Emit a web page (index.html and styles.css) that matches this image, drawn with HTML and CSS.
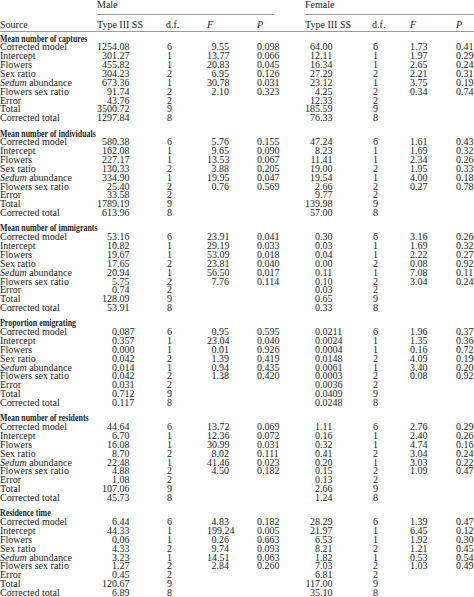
FILE: index.html
```html
<!DOCTYPE html>
<html lang="en">
<head>
<meta charset="utf-8">
<title>ANOVA table</title>
<link rel="stylesheet" href="styles.css">
</head>
<body>
<table class="anova">
  <colgroup>
    <col class="w-src"><col class="w-ssm"><col class="w-dfm"><col class="w-fm"><col class="w-pm">
    <col class="w-ssf"><col class="w-dff"><col class="w-ff"><col class="w-pf">
  </colgroup>
  <thead>
    <tr class="grp">
      <th></th>
      <th colspan="4"><div class="grp-label male">Male</div></th>
      <th colspan="4"><div class="grp-label">Female</div></th>
    </tr>
    <tr class="cols">
      <th>Source</th><th>Type III SS</th><th class="df">d.f.</th><th><i>F</i></th><th><i>P</i></th>
      <th>Type III SS</th><th class="df">d.f.</th><th><i>F</i></th><th><i>P</i></th>
    </tr>
  </thead>

  <tbody class="sec first">
    <tr class="sec-head"><td colspan="9"><span class="sh">Mean number of captures</span></td></tr>
    <tr><td>Corrected model</td><td class="ssm"><span class="i">1254</span>.08</td><td class="df">6</td><td class="fm">9.55</td><td>0.098</td><td class="ssf"><span class="i">64</span>.00</td><td class="df">6</td><td class="ff">1.73</td><td>0.411</td></tr>
    <tr><td>Intercept</td><td class="ssm"><span class="i">301</span>.27</td><td class="df">1</td><td class="fm">13.77</td><td>0.066</td><td class="ssf"><span class="i">12</span>.11</td><td class="df">1</td><td class="ff">1.97</td><td>0.296</td></tr>
    <tr><td>Flowers</td><td class="ssm"><span class="i">455</span>.82</td><td class="df">1</td><td class="fm">20.83</td><td>0.045</td><td class="ssf"><span class="i">16</span>.34</td><td class="df">1</td><td class="ff">2.65</td><td>0.245</td></tr>
    <tr><td>Sex ratio</td><td class="ssm"><span class="i">304</span>.23</td><td class="df">2</td><td class="fm">6.95</td><td>0.126</td><td class="ssf"><span class="i">27</span>.29</td><td class="df">2</td><td class="ff">2.21</td><td>0.311</td></tr>
    <tr><td><i>Sedum</i> abundance</td><td class="ssm"><span class="i">673</span>.36</td><td class="df">1</td><td class="fm">30.78</td><td>0.031</td><td class="ssf"><span class="i">23</span>.12</td><td class="df">1</td><td class="ff">3.75</td><td>0.192</td></tr>
    <tr><td>Flowers sex ratio</td><td class="ssm"><span class="i">91</span>.74</td><td class="df">2</td><td class="fm">2.10</td><td>0.323</td><td class="ssf"><span class="i">4</span>.25</td><td class="df">2</td><td class="ff">0.34</td><td>0.744</td></tr>
    <tr><td>Error</td><td class="ssm"><span class="i">43</span>.76</td><td class="df">2</td><td></td><td></td><td class="ssf"><span class="i">12</span>.33</td><td class="df">2</td><td></td><td></td></tr>
    <tr><td>Total</td><td class="ssm"><span class="i">3500</span>.72</td><td class="df">9</td><td></td><td></td><td class="ssf"><span class="i">185</span>.59</td><td class="df">9</td><td></td><td></td></tr>
    <tr><td>Corrected total</td><td class="ssm"><span class="i">1297</span>.84</td><td class="df">8</td><td></td><td></td><td class="ssf"><span class="i">76</span>.33</td><td class="df">8</td><td></td><td></td></tr>
  </tbody>

  <tbody class="sec">
    <tr class="sec-head"><td colspan="9"><span class="sh">Mean number of individuals</span></td></tr>
    <tr><td>Corrected model</td><td class="ssm"><span class="i">580</span>.38</td><td class="df">6</td><td class="fm">5.76</td><td>0.155</td><td class="ssf"><span class="i">47</span>.24</td><td class="df">6</td><td class="ff">1.61</td><td>0.431</td></tr>
    <tr><td>Intercept</td><td class="ssm"><span class="i">162</span>.08</td><td class="df">1</td><td class="fm">9.65</td><td>0.090</td><td class="ssf"><span class="i">8</span>.23</td><td class="df">1</td><td class="ff">1.69</td><td>0.324</td></tr>
    <tr><td>Flowers</td><td class="ssm"><span class="i">227</span>.17</td><td class="df">1</td><td class="fm">13.53</td><td>0.067</td><td class="ssf"><span class="i">11</span>.41</td><td class="df">1</td><td class="ff">2.34</td><td>0.266</td></tr>
    <tr><td>Sex ratio</td><td class="ssm"><span class="i">130</span>.33</td><td class="df">2</td><td class="fm">3.88</td><td>0.205</td><td class="ssf"><span class="i">19</span>.00</td><td class="df">2</td><td class="ff">1.95</td><td>0.339</td></tr>
    <tr><td><i>Sedum</i> abundance</td><td class="ssm"><span class="i">334</span>.90</td><td class="df">1</td><td class="fm">19.95</td><td>0.047</td><td class="ssf"><span class="i">19</span>.54</td><td class="df">1</td><td class="ff">4.00</td><td>0.183</td></tr>
    <tr><td>Flowers sex ratio</td><td class="ssm"><span class="i">25</span>.40</td><td class="df">2</td><td class="fm">0.76</td><td>0.569</td><td class="ssf"><span class="i">2</span>.66</td><td class="df">2</td><td class="ff">0.27</td><td>0.786</td></tr>
    <tr><td>Error</td><td class="ssm"><span class="i">33</span>.58</td><td class="df">2</td><td></td><td></td><td class="ssf"><span class="i">9</span>.77</td><td class="df">2</td><td></td><td></td></tr>
    <tr><td>Total</td><td class="ssm"><span class="i">1789</span>.19</td><td class="df">9</td><td></td><td></td><td class="ssf"><span class="i">139</span>.98</td><td class="df">9</td><td></td><td></td></tr>
    <tr><td>Corrected total</td><td class="ssm"><span class="i">613</span>.96</td><td class="df">8</td><td></td><td></td><td class="ssf"><span class="i">57</span>.00</td><td class="df">8</td><td></td><td></td></tr>
  </tbody>

  <tbody class="sec">
    <tr class="sec-head"><td colspan="9"><span class="sh">Mean number of immigrants</span></td></tr>
    <tr><td>Corrected model</td><td class="ssm"><span class="i">53</span>.16</td><td class="df">6</td><td class="fm">23.91</td><td>0.041</td><td class="ssf"><span class="i">0</span>.30</td><td class="df">6</td><td class="ff">3.16</td><td>0.260</td></tr>
    <tr><td>Intercept</td><td class="ssm"><span class="i">10</span>.82</td><td class="df">1</td><td class="fm">29.19</td><td>0.033</td><td class="ssf"><span class="i">0</span>.03</td><td class="df">1</td><td class="ff">1.69</td><td>0.323</td></tr>
    <tr><td>Flowers</td><td class="ssm"><span class="i">19</span>.67</td><td class="df">1</td><td class="fm">53.09</td><td>0.018</td><td class="ssf"><span class="i">0</span>.04</td><td class="df">1</td><td class="ff">2.22</td><td>0.275</td></tr>
    <tr><td>Sex ratio</td><td class="ssm"><span class="i">17</span>.65</td><td class="df">2</td><td class="fm">23.81</td><td>0.040</td><td class="ssf"><span class="i">0</span>.00</td><td class="df">2</td><td class="ff">0.08</td><td>0.923</td></tr>
    <tr><td><i>Sedum</i> abundance</td><td class="ssm"><span class="i">20</span>.94</td><td class="df">1</td><td class="fm">56.50</td><td>0.017</td><td class="ssf"><span class="i">0</span>.11</td><td class="df">1</td><td class="ff">7.08</td><td>0.117</td></tr>
    <tr><td>Flowers sex ratio</td><td class="ssm"><span class="i">5</span>.75</td><td class="df">2</td><td class="fm">7.76</td><td>0.114</td><td class="ssf"><span class="i">0</span>.10</td><td class="df">2</td><td class="ff">3.04</td><td>0.249</td></tr>
    <tr><td>Error</td><td class="ssm"><span class="i">0</span>.74</td><td class="df">2</td><td></td><td></td><td class="ssf"><span class="i">0</span>.03</td><td class="df">2</td><td></td><td></td></tr>
    <tr><td>Total</td><td class="ssm"><span class="i">128</span>.09</td><td class="df">9</td><td></td><td></td><td class="ssf"><span class="i">0</span>.65</td><td class="df">9</td><td></td><td></td></tr>
    <tr><td>Corrected total</td><td class="ssm"><span class="i">53</span>.91</td><td class="df">8</td><td></td><td></td><td class="ssf"><span class="i">0</span>.33</td><td class="df">8</td><td></td><td></td></tr>
  </tbody>

  <tbody class="sec">
    <tr class="sec-head"><td colspan="9"><span class="sh">Proportion emigrating</span></td></tr>
    <tr><td>Corrected model</td><td class="ssm"><span class="i">0</span>.087</td><td class="df">6</td><td class="fm">0.95</td><td>0.595</td><td class="ssf"><span class="i">0</span>.0211</td><td class="df">6</td><td class="ff">1.96</td><td>0.376</td></tr>
    <tr><td>Intercept</td><td class="ssm"><span class="i">0</span>.357</td><td class="df">1</td><td class="fm">23.04</td><td>0.040</td><td class="ssf"><span class="i">0</span>.0024</td><td class="df">1</td><td class="ff">1.35</td><td>0.366</td></tr>
    <tr><td>Flowers</td><td class="ssm"><span class="i">0</span>.000</td><td class="df">1</td><td class="fm">0.01</td><td>0.926</td><td class="ssf"><span class="i">0</span>.0004</td><td class="df">1</td><td class="ff">0.16</td><td>0.728</td></tr>
    <tr><td>Sex ratio</td><td class="ssm"><span class="i">0</span>.042</td><td class="df">2</td><td class="fm">1.39</td><td>0.419</td><td class="ssf"><span class="i">0</span>.0148</td><td class="df">2</td><td class="ff">4.09</td><td>0.196</td></tr>
    <tr><td><i>Sedum</i> abundance</td><td class="ssm"><span class="i">0</span>.014</td><td class="df">1</td><td class="fm">0.94</td><td>0.435</td><td class="ssf"><span class="i">0</span>.0061</td><td class="df">1</td><td class="ff">3.40</td><td>0.207</td></tr>
    <tr><td>Flowers sex ratio</td><td class="ssm"><span class="i">0</span>.042</td><td class="df">2</td><td class="fm">1.38</td><td>0.420</td><td class="ssf"><span class="i">0</span>.0003</td><td class="df">2</td><td class="ff">0.08</td><td>0.927</td></tr>
    <tr><td>Error</td><td class="ssm"><span class="i">0</span>.031</td><td class="df">2</td><td></td><td></td><td class="ssf"><span class="i">0</span>.0036</td><td class="df">2</td><td></td><td></td></tr>
    <tr><td>Total</td><td class="ssm"><span class="i">0</span>.712</td><td class="df">9</td><td></td><td></td><td class="ssf"><span class="i">0</span>.0409</td><td class="df">9</td><td></td><td></td></tr>
    <tr><td>Corrected total</td><td class="ssm"><span class="i">0</span>.117</td><td class="df">8</td><td></td><td></td><td class="ssf"><span class="i">0</span>.0248</td><td class="df">8</td><td></td><td></td></tr>
  </tbody>

  <tbody class="sec">
    <tr class="sec-head"><td colspan="9"><span class="sh">Mean number of residents</span></td></tr>
    <tr><td>Corrected model</td><td class="ssm"><span class="i">44</span>.64</td><td class="df">6</td><td class="fm">13.72</td><td>0.069</td><td class="ssf"><span class="i">1</span>.11</td><td class="df">6</td><td class="ff">2.76</td><td>0.290</td></tr>
    <tr><td>Intercept</td><td class="ssm"><span class="i">6</span>.70</td><td class="df">1</td><td class="fm">12.36</td><td>0.072</td><td class="ssf"><span class="i">0</span>.16</td><td class="df">1</td><td class="ff">2.40</td><td>0.261</td></tr>
    <tr><td>Flowers</td><td class="ssm"><span class="i">16</span>.08</td><td class="df">1</td><td class="fm">30.99</td><td>0.031</td><td class="ssf"><span class="i">0</span>.32</td><td class="df">1</td><td class="ff">4.74</td><td>0.161</td></tr>
    <tr><td>Sex ratio</td><td class="ssm"><span class="i">8</span>.70</td><td class="df">2</td><td class="fm">8.02</td><td>0.111</td><td class="ssf"><span class="i">0</span>.41</td><td class="df">2</td><td class="ff">3.04</td><td>0.247</td></tr>
    <tr><td><i>Sedum</i> abundance</td><td class="ssm"><span class="i">22</span>.48</td><td class="df">1</td><td class="fm">41.46</td><td>0.023</td><td class="ssf"><span class="i">0</span>.20</td><td class="df">1</td><td class="ff">3.03</td><td>0.224</td></tr>
    <tr><td>Flowers sex ratio</td><td class="ssm"><span class="i">4</span>.88</td><td class="df">2</td><td class="fm">4.50</td><td>0.182</td><td class="ssf"><span class="i">0</span>.15</td><td class="df">2</td><td class="ff">1.09</td><td>0.478</td></tr>
    <tr><td>Error</td><td class="ssm"><span class="i">1</span>.08</td><td class="df">2</td><td></td><td></td><td class="ssf"><span class="i">0</span>.13</td><td class="df">2</td><td></td><td></td></tr>
    <tr><td>Total</td><td class="ssm"><span class="i">107</span>.06</td><td class="df">9</td><td></td><td></td><td class="ssf"><span class="i">2</span>.66</td><td class="df">9</td><td></td><td></td></tr>
    <tr><td>Corrected total</td><td class="ssm"><span class="i">45</span>.73</td><td class="df">8</td><td></td><td></td><td class="ssf"><span class="i">1</span>.24</td><td class="df">8</td><td></td><td></td></tr>
  </tbody>

  <tbody class="sec">
    <tr class="sec-head"><td colspan="9"><span class="sh">Residence time</span></td></tr>
    <tr><td>Corrected model</td><td class="ssm"><span class="i">6</span>.44</td><td class="df">6</td><td class="fm">4.83</td><td>0.182</td><td class="ssf"><span class="i">28</span>.29</td><td class="df">6</td><td class="ff">1.39</td><td>0.476</td></tr>
    <tr><td>Intercept</td><td class="ssm"><span class="i">44</span>.33</td><td class="df">1</td><td class="fm">199.24</td><td>0.005</td><td class="ssf"><span class="i">21</span>.97</td><td class="df">1</td><td class="ff">6.45</td><td>0.126</td></tr>
    <tr><td>Flowers</td><td class="ssm"><span class="i">0</span>.06</td><td class="df">1</td><td class="fm">0.26</td><td>0.663</td><td class="ssf"><span class="i">6</span>.53</td><td class="df">1</td><td class="ff">1.92</td><td>0.300</td></tr>
    <tr><td>Sex ratio</td><td class="ssm"><span class="i">4</span>.33</td><td class="df">2</td><td class="fm">9.74</td><td>0.093</td><td class="ssf"><span class="i">8</span>.21</td><td class="df">2</td><td class="ff">1.21</td><td>0.453</td></tr>
    <tr><td><i>Sedum</i> abundance</td><td class="ssm"><span class="i">3</span>.23</td><td class="df">1</td><td class="fm">14.51</td><td>0.063</td><td class="ssf"><span class="i">1</span>.82</td><td class="df">1</td><td class="ff">0.53</td><td>0.541</td></tr>
    <tr><td>Flowers sex ratio</td><td class="ssm"><span class="i">1</span>.27</td><td class="df">2</td><td class="fm">2.84</td><td>0.260</td><td class="ssf"><span class="i">7</span>.03</td><td class="df">2</td><td class="ff">1.03</td><td>0.492</td></tr>
    <tr><td>Error</td><td class="ssm"><span class="i">0</span>.45</td><td class="df">2</td><td></td><td></td><td class="ssf"><span class="i">6</span>.81</td><td class="df">2</td><td></td><td></td></tr>
    <tr><td>Total</td><td class="ssm"><span class="i">120</span>.67</td><td class="df">9</td><td></td><td></td><td class="ssf"><span class="i">117</span>.00</td><td class="df">9</td><td></td><td></td></tr>
    <tr><td>Corrected total</td><td class="ssm"><span class="i">6</span>.89</td><td class="df">8</td><td></td><td></td><td class="ssf"><span class="i">35</span>.10</td><td class="df">8</td><td></td><td></td></tr>
  </tbody>
</table>
</body>
</html>
```

FILE: styles.css
```css
html, body {
  margin: 0;
  padding: 0;
  background: #ffffff;
}

body {
  width: 474px;
  height: 597px;
  overflow: hidden;
  font-family: "Liberation Serif", "Times New Roman", serif;
  font-size: 10px;
  color: #1e1e1e;
}

.anova {
  width: 520px;
  table-layout: fixed;
  border-collapse: collapse;
  border-spacing: 0;
}

.w-src { width: 97px; }
.w-ssm { width: 69px; }
.w-dfm { width: 41px; }
.w-fm  { width: 50px; }
.w-pm  { width: 48px; }
.w-ssf { width: 67px; }
.w-dff { width: 38px; }
.w-ff  { width: 46px; }
.w-pf  { width: 64px; }

.anova th,
.anova td {
  padding: 0;
  text-align: left;
  font-weight: normal;
  white-space: nowrap;
  vertical-align: top;
}

.anova td {
  line-height: 8.84px;
  height: 8.84px;
}

/* header rows */
.grp-label {
  line-height: 10px;
  padding-bottom: 4px;
  border-bottom: 1px solid #9a9a9a;
}

.grp-label.male {
  margin-right: 30px;
}

.cols th {
  line-height: 10px;
  padding-top: 5px;
  padding-bottom: 1px;
  border-bottom: 1px solid #9a9a9a;
}

.cols th.df {
  padding-left: 0;
}

/* sections */
.sec-head td {
  padding-top: 6.5px;
}

.sec.first .sec-head td {
  padding-top: 2.6px;
}

.sh {
  display: inline-block;
  font-weight: bold;
  transform: scaleX(0.79);
  transform-origin: left center;
}

/* numeric columns */
.ssm .i {
  display: inline-block;
  width: 20px;
  text-align: right;
}

.ssf .i {
  display: inline-block;
  width: 15px;
  text-align: right;
}

td.df {
  padding-left: 1px;
}

td.fm {
  text-align: right;
  padding-right: 28px;
}

td.ff {
  text-align: right;
  padding-right: 29px;
}
```
